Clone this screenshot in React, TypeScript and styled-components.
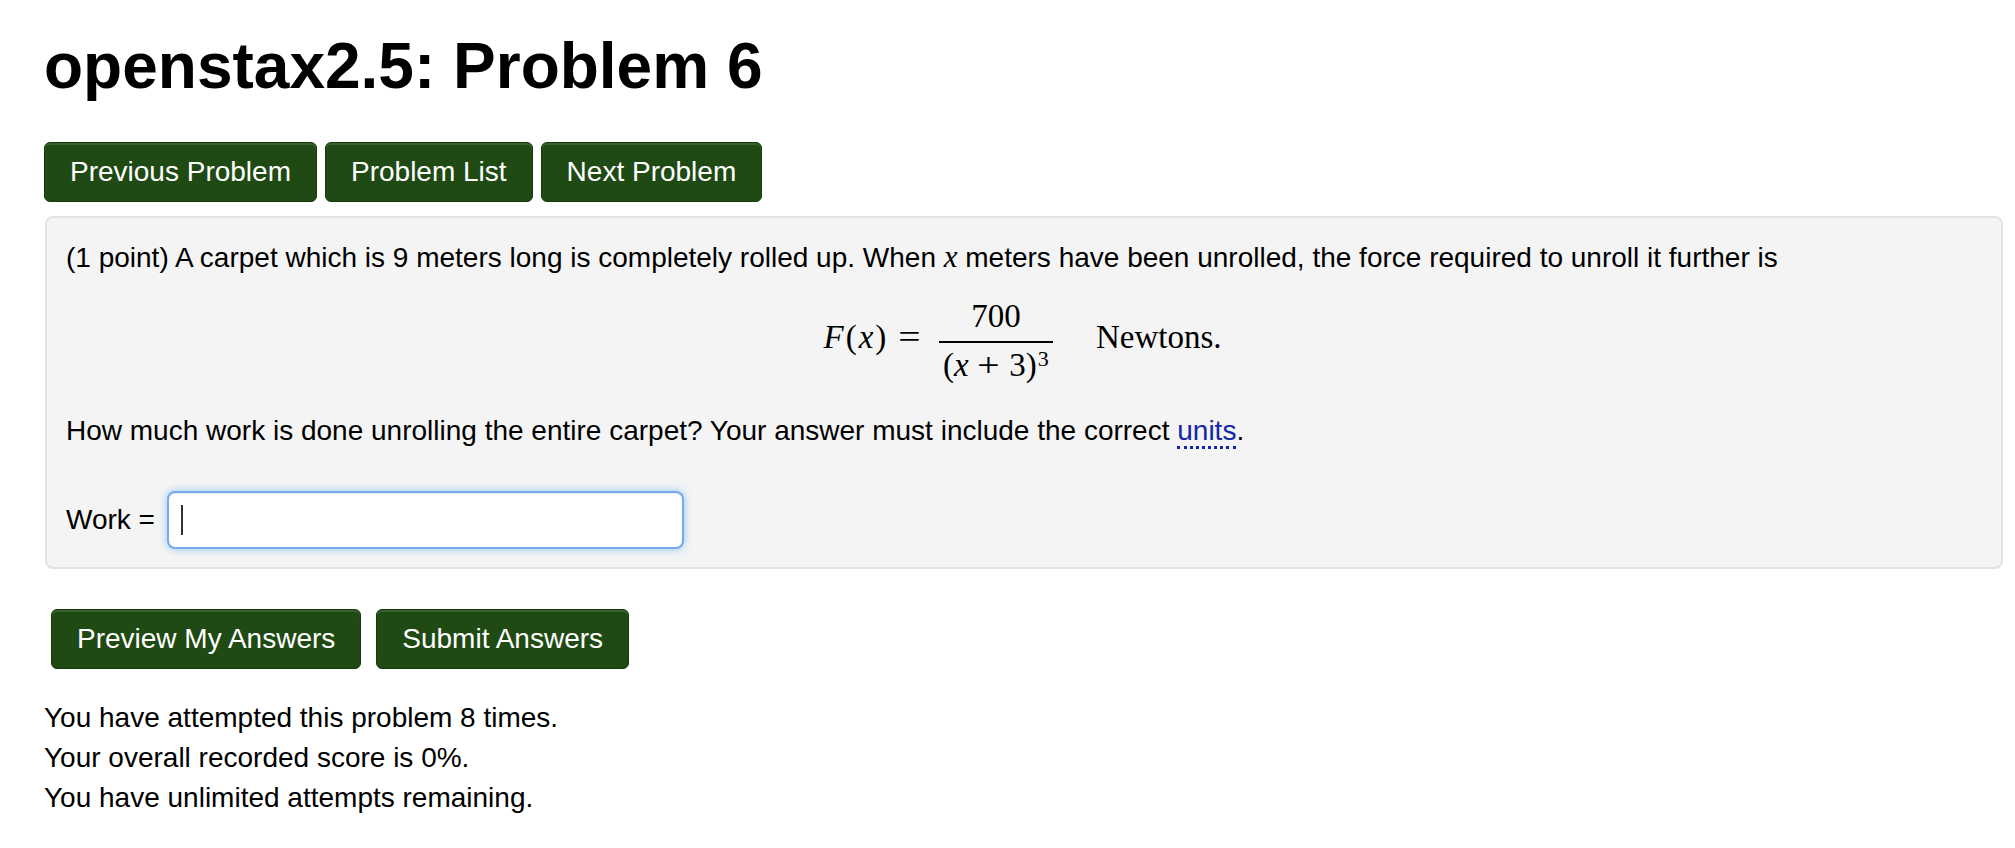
import styled, { createGlobalStyle } from "styled-components";

const GlobalStyle = createGlobalStyle`
  html, body {
    margin: 0;
    padding: 0;
    background: #ffffff;
  }
  body {
    font-family: "Liberation Sans", Arial, Helvetica, sans-serif;
    color: #000;
    font-size: 28px;
    line-height: 40px;
  }
`;

const Page = styled.div`
  padding: 0 12px 40px 44px;
`;

const Title = styled.h1`
  margin: 31px 0 0;
  font-size: 64px;
  line-height: 70px;
  font-weight: bold;
  color: #000;
`;

const NavBar = styled.div<{ $offset?: number; $gap?: number }>`
  display: flex;
  gap: ${(p) => p.$gap ?? 8}px;
  margin-left: ${(p) => p.$offset ?? 0}px;
`;

const Button = styled.button`
  font-family: "Liberation Sans", Arial, sans-serif;
  font-size: 28px;
  line-height: 40px;
  padding: 9px 25px;
  color: #fff;
  background: #1f4a13;
  border: 1px solid #153a0b;
  border-radius: 6px;
  box-shadow: inset 0 2px 0 rgba(255, 255, 255, 0.12);
  cursor: pointer;
`;

const Well = styled.div`
  margin: 14px 0 0 1px;
  padding: 19px 19px 18px;
  background: #f4f4f4;
  border: 2px solid #e3e3e3;
  border-radius: 8px;
`;

const Text = styled.p`
  margin: 0;
`;

const Var = styled.span`
  font-family: "Liberation Serif", "Times New Roman", serif;
  font-style: italic;
  font-size: 31px;
`;

const MathBlock = styled.div`
  margin: 22px 0 29px -3px;
  text-align: center;
  font-family: "Liberation Serif", "Times New Roman", serif;
  font-size: 33px;
  line-height: 33px;
`;

const MathRow = styled.span`
  white-space: nowrap;
`;

const FuncName = styled.span`
  letter-spacing: 2px;
`;

const Italic = styled.span`
  font-style: italic;
`;

const Op = styled.span<{ $l?: number; $r?: number }>`
  display: inline-block;
  margin: 0 ${(p) => p.$r ?? 0}px 0 ${(p) => p.$l ?? 0}px;
  transform: scaleX(1.2);
`;

const Frac = styled.span`
  display: inline-flex;
  flex-direction: column;
  align-items: center;
  vertical-align: 21px;
  min-width: 114px;
  margin-left: 20px;
`;

const Numer = styled.span`
  padding-bottom: 8px;
`;

const Bar = styled.span`
  align-self: stretch;
  height: 2px;
  background: #000;
`;

const Denom = styled.span`
  padding-top: 6px;
`;

const Sup = styled.span`
  font-size: 22px;
  line-height: 0;
  vertical-align: 10px;
  margin-left: 1px;
`;

const Units = styled.span`
  margin-left: 43px;
`;

const Link = styled.a`
  color: #1325a8;
  text-decoration: none;
  border-bottom: 3px dotted #1325a8;
`;

const AnswerRow = styled.div`
  display: flex;
  align-items: center;
  margin-top: 40px;
`;

const Label = styled.span`
  margin-right: 12px;
`;

const InputWrap = styled.span`
  position: relative;
  display: inline-block;
`;

const Input = styled.input`
  box-sizing: border-box;
  width: 517px;
  height: 58px;
  padding: 0 12px;
  font-family: "Liberation Sans", Arial, sans-serif;
  font-size: 28px;
  background: #fff;
  border: 2px solid rgba(82, 150, 230, 0.8);
  border-radius: 8px;
  box-shadow: inset 0 1px 1px rgba(0, 0, 0, 0.075), 0 0 8px rgba(82, 168, 236, 0.6);
  outline: none;
  caret-color: transparent;
`;

const Caret = styled.span`
  position: absolute;
  left: 14px;
  top: 14px;
  width: 2px;
  height: 30px;
  background: #333;
`;

const SubmitBar = styled(NavBar)`
  margin-top: 40px;
`;

const Status = styled.div`
  margin-top: 29px;
`;

export default function App() {
  return (
    <>
      <GlobalStyle />
      <Page>
        <Title>openstax2.5: Problem 6</Title>

        <NavBar style={{ marginTop: 41 }}>
          <Button>Previous Problem</Button>
          <Button>Problem List</Button>
          <Button>Next Problem</Button>
        </NavBar>

        <Well>
          <Text>
            (1 point) A carpet which is 9 meters long is completely rolled up. When <Var>x</Var> meters have been
            unrolled, the force required to unroll it further is
          </Text>

          <MathBlock>
            <MathRow>
              <FuncName>
                <Italic>F</Italic>(<Italic>x</Italic>)
              </FuncName>
              <Op $l={12}>=</Op>
              <Frac>
                <Numer>700</Numer>
                <Bar />
                <Denom>
                  (<Italic>x</Italic>
                  <Op $l={10} $r={12}>+</Op>3)<Sup>3</Sup>
                </Denom>
              </Frac>
              <Units>Newtons.</Units>
            </MathRow>
          </MathBlock>

          <Text>
            How much work is done unrolling the entire carpet? Your answer must include the correct{" "}
            <Link href="#">units</Link>.
          </Text>

          <AnswerRow>
            <Label>Work =</Label>
            <InputWrap>
              <Input type="text" aria-label="Work" defaultValue="" />
              <Caret />
            </InputWrap>
          </AnswerRow>
        </Well>

        <SubmitBar $offset={7} $gap={15}>
          <Button>Preview My Answers</Button>
          <Button>Submit Answers</Button>
        </SubmitBar>

        <Status>
          <Text>You have attempted this problem 8 times.</Text>
          <Text>Your overall recorded score is 0%.</Text>
          <Text>You have unlimited attempts remaining.</Text>
        </Status>
      </Page>
    </>
  );
}
